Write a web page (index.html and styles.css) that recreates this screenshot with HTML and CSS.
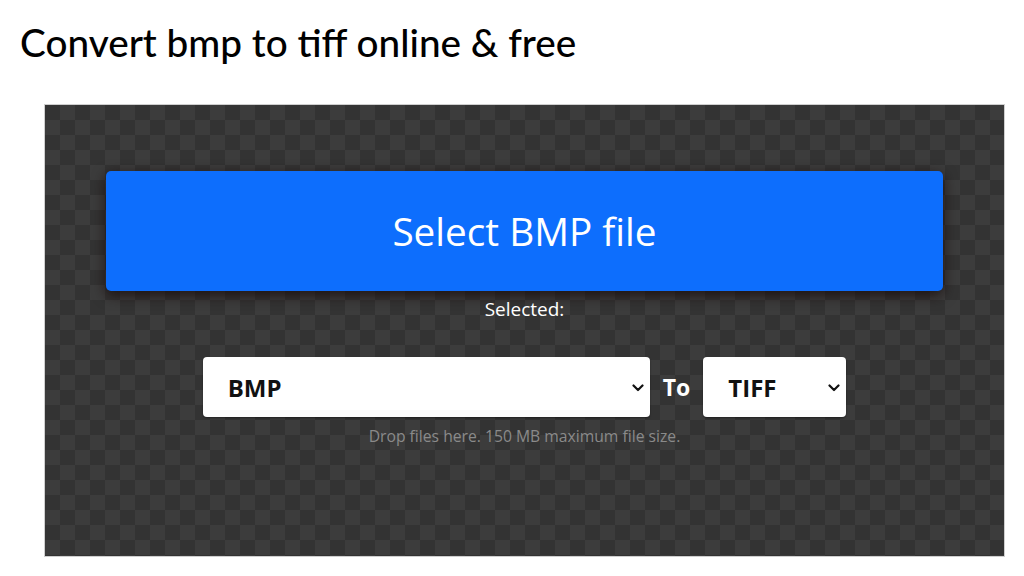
FILE: index.html
```html
<!DOCTYPE html>
<html lang="en">
<head>
<meta charset="utf-8">
<title>Convert bmp to tiff online &amp; free</title>
<link rel="stylesheet" href="styles.css">
</head>
<body>
<h1 class="title">Convert bmp to tiff online &amp; free</h1>
<section class="panel">
  <button class="select-btn" type="button">Select BMP file</button>
  <p class="selected">Selected:</p>
  <div class="format-row">
    <div class="dropdown dropdown-from">
      <select class="dropdown-select" aria-label="From format">
        <option>BMP</option>
      </select>
      <svg class="chevron" viewBox="0 0 12 8" width="12" height="8" aria-hidden="true"><path d="M1.5 1.5 L6 6 L10.5 1.5" fill="none" stroke="#111" stroke-width="2.2" stroke-linecap="round" stroke-linejoin="round"/></svg>
    </div>
    <span class="to-label">To</span>
    <div class="dropdown dropdown-to">
      <select class="dropdown-select" aria-label="To format">
        <option>TIFF</option>
      </select>
      <svg class="chevron" viewBox="0 0 12 8" width="12" height="8" aria-hidden="true"><path d="M1.5 1.5 L6 6 L10.5 1.5" fill="none" stroke="#111" stroke-width="2.2" stroke-linecap="round" stroke-linejoin="round"/></svg>
    </div>
  </div>
  <p class="hint">Drop files here. 150 MB maximum file size.</p>
</section>
</body>
</html>
```
FILE: styles.css
```css
html, body {
  margin: 0;
  padding: 0;
  background: #ffffff;
}

body {
  width: 1024px;
  height: 576px;
  overflow: hidden;
}

.title {
  margin: 0;
  padding: 18px 0 0 20px;
  height: 104px;
  box-sizing: border-box;
  font-family: "Lato", "DejaVu Sans", sans-serif;
  font-weight: 500;
  font-size: 38.7px;
  line-height: 48px;
  color: #000;
}

.panel {
  margin-left: 44px;
  width: 961px;
  height: 453px;
  box-sizing: border-box;
  border: 1px solid #cfcfcf;
  background-color: #333333;
  background-image:
    linear-gradient(45deg, #3c3c3c 25%, transparent 25%, transparent 75%, #3c3c3c 75%),
    linear-gradient(45deg, #3c3c3c 25%, transparent 25%, transparent 75%, #3c3c3c 75%);
  background-size: 30px 30px;
  background-position: 0 0, 15px 15px;
  display: flex;
  flex-direction: column;
  align-items: center;
  padding-top: 66px;
  font-family: "Open Sans", "Liberation Sans", sans-serif;
}

.select-btn {
  width: 837px;
  height: 120px;
  border: none;
  border-radius: 5px;
  background: #0d6efd;
  color: #ffffff;
  font-family: "Open Sans", "Liberation Sans", sans-serif;
  font-size: 38.7px;
  font-weight: 400;
  box-shadow: 0 4px 14px rgba(20, 6, 6, 0.75);
  cursor: pointer;
}

.selected {
  margin: 5px 0 0;
  color: #ffffff;
  font-size: 19px;
  line-height: 26px;
}

.format-row {
  margin-top: 35px;
  display: flex;
  align-items: center;
  gap: 13px;
}

.dropdown {
  position: relative;
  height: 60px;
}

.dropdown-from {
  width: 447px;
}

.dropdown-to {
  width: 143px;
}

.dropdown-select {
  appearance: none;
  -webkit-appearance: none;
  width: 100%;
  height: 100%;
  border: none;
  border-radius: 4px;
  background: #ffffff;
  padding: 0 0 0 25px;
  font-family: "Open Sans", "Liberation Sans", sans-serif;
  font-weight: 700;
  font-size: 24px;
  color: #111;
  box-shadow: 0 1px 2px rgba(0, 0, 0, 0.4);
}

.chevron {
  position: absolute;
  right: 6px;
  top: 27px;
  pointer-events: none;
}

.to-label {
  color: #ffffff;
  font-weight: 700;
  font-size: 23px;
}

.hint {
  margin: 8px 0 0;
  color: #8a8a8a;
  font-size: 15.7px;
  line-height: 22px;
}
```
